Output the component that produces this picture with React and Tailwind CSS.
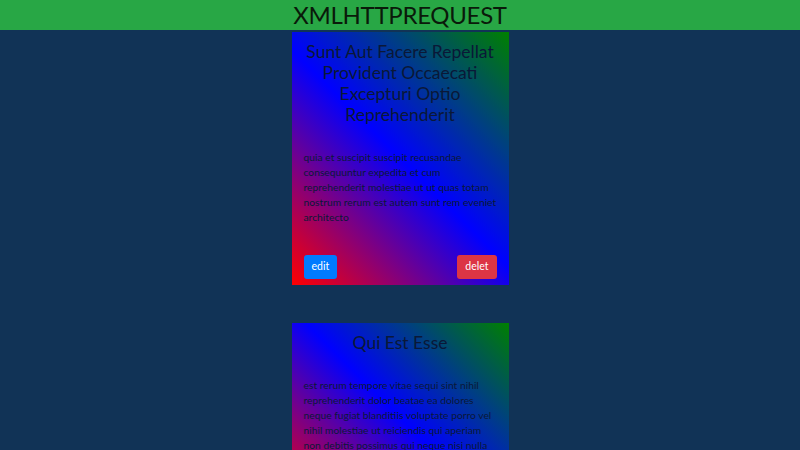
import React from 'react';

const posts = [
  {
    id: 1,
    title: 'Sunt Aut Facere Repellat Provident Occaecati Excepturi Optio Reprehenderit',
    body: 'quia et suscipit suscipit recusandae consequuntur expedita et cum reprehenderit molestiae ut ut quas totam nostrum rerum est autem sunt rem eveniet architecto',
  },
  {
    id: 2,
    title: 'Qui Est Esse',
    body: 'est rerum tempore vitae sequi sint nihil reprehenderit dolor beatae ea dolores neque fugiat blanditiis voluptate porro vel nihil molestiae ut reiciendis qui aperiam non debitis possimus qui neque nisi nulla',
  },
];

const PostCard = ({ post }) => (
  <div className="w-[217px] flex flex-col bg-[linear-gradient(45deg,#ff0000,#0000ff_50%,#008000)] text-[#0a1838] px-3 pt-[9px] pb-[6px]">
    <h2 className="text-center text-[17.5px] leading-[21px] -mx-1">{post.title}</h2>
    <p className="mt-[25px] text-[10.3px] leading-[15px]">{post.body}</p>
    <div className="mt-[30px] flex justify-between">
      <button className="bg-[#007bff] text-white text-[10.5px] rounded-[3px] h-[24px] px-[8px]">edit</button>
      <button className="bg-[#dc3545] text-white text-[10.5px] rounded-[3px] h-[24px] px-[8px]">delet</button>
    </div>
  </div>
);

export default function App() {
  return (
    <div className="h-screen overflow-hidden bg-[#113356] font-['Lato',sans-serif]">
      <header className="h-[30px] bg-[#28a745] flex items-center justify-center">
        <h1 className="text-[24px] leading-[30px] tracking-[-0.3px] text-[#0a1a0a]">XMLHTTPREQUEST</h1>
      </header>
      <main className="flex flex-col items-center gap-[38px] pt-[2px] pb-10">
        {posts.map((post) => (
          <PostCard key={post.id} post={post} />
        ))}
      </main>
    </div>
  );
}
